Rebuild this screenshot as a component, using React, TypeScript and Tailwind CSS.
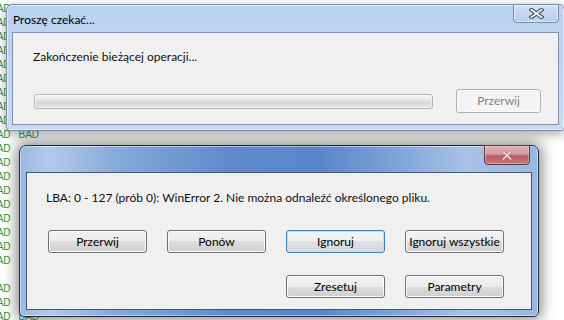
import React from 'react';

// only the cells that peek out from behind the dialogs
function Backdrop() {
  const rows = Array.from({ length: 23 }, (_, i) => i);
  return (
    <div className="pt-[2px] ml-[-10px] text-[10px] leading-[14px] text-[#2f962f] font-['Liberation_Sans',Arial,sans-serif]">
      {rows.map((i) => (
        <div key={i} className="flex h-[14px]">
          {i !== 19 && <span className="w-[28.5px]">BAD</span>}
          {(i === 9 || i === 22) && <span className="w-[28.5px]">BAD</span>}
        </div>
      ))}
    </div>
  );
}

function CloseGlyph({ active }: { active?: boolean }) {
  if (active) {
    return (
      <svg width="10" height="9" viewBox="0 0 10 9">
        <path d="M1.5 1 L8.5 8 M8.5 1 L1.5 8" stroke="#a8525b" strokeWidth="3" strokeLinecap="square" opacity="0.5" />
        <path d="M1.5 1 L8.5 8 M8.5 1 L1.5 8" stroke="#f2d9db" strokeWidth="1.6" strokeLinecap="square" />
      </svg>
    );
  }
  return (
    <svg width="15" height="11" viewBox="0 0 15 11">
      <path d="M2.5 1.8 L12.5 9.2 M12.5 1.8 L2.5 9.2" stroke="#3e4b5e" strokeWidth="4" strokeLinecap="square" />
      <path d="M2.5 1.8 L12.5 9.2 M12.5 1.8 L2.5 9.2" stroke="#eef2f7" strokeWidth="2" strokeLinecap="square" />
    </svg>
  );
}

type BtnKind = 'normal' | 'default' | 'disabled';

function Btn({ label, kind = 'normal', className = '' }: { label: string; kind?: BtnKind; className?: string }) {
  const styles: Record<BtnKind, string> = {
    normal:
      'border-[#707070] text-black bg-[linear-gradient(to_bottom,#f2f2f2_0%,#ebebeb_50%,#dddddd_50%,#cfcfcf_100%)] shadow-[inset_0_0_0_1px_#fbfbfb]',
    default:
      'border-[#3c7fb1] text-black bg-[linear-gradient(to_bottom,#f4f6f8_0%,#edf0f2_50%,#dfe3e6_50%,#d3d8dc_100%)] shadow-[inset_0_0_0_1px_#b9e1fa]',
    disabled: 'border-[#adb2b5] text-[#838383] bg-[#f4f4f4] shadow-[inset_0_0_0_1px_#fbfbfb]',
  };
  return (
    <div className={`flex items-center justify-center rounded-[3px] border text-[12px] ${styles[kind]} ${className}`}>
      {label}
    </div>
  );
}

export default function App() {
  return (
    <div className="relative w-[564px] h-[320px] overflow-hidden bg-white font-['Lato','Segoe_UI',sans-serif] text-[12px] leading-[16px] text-[#111]">
      <Backdrop />

      {/* inactive progress window */}
      <div className="absolute left-[6px] top-[4px] w-[559px] h-[127px] flex flex-col px-[5px] pb-[5px] rounded-t-[6px] rounded-b-[4px] border border-[#7c8ca1] bg-[linear-gradient(to_bottom,#bad2f0_0%,#bcd3f0_40%,#c8dbf2_100%)] shadow-[0_3px_12px_rgba(0,0,0,0.35),inset_0_0_0_1px_rgba(255,255,255,0.55)]">
        <div className="h-[27px] flex items-center pl-[1px] pt-[3px] text-black">Proszę czekać...</div>
        <div className="flex-1 border border-[#8394a9] bg-[#f0f0f0] pl-[20px] pt-[16px]">
          <div>Zakończenie bieżącej operacji...</div>
          <div className="flex items-center mt-[24px]">
            <div className="ml-[1px] w-[399px] h-[15px] rounded-[3px] border border-[#b2b2b2] bg-[linear-gradient(to_bottom,#f7f7f7_0%,#e6e6e6_35%,#d8d8d8_55%,#dedede_80%,#ebebeb_100%)] shadow-[inset_0_0_0_1px_rgba(255,255,255,0.6)]" />
            <Btn label="Przerwij" kind="disabled" className="ml-[23px] w-[85px] h-[24px]" />
          </div>
        </div>
        <div className="absolute left-[506px] top-[-1px] w-[46px] h-[19px] flex items-center justify-center rounded-b-[4px] border border-[#7a8ca4] bg-[linear-gradient(to_bottom,#d3e2f4_0%,#c3d7f0_50%,#b8cfee_100%)] shadow-[inset_0_0_0_1px_rgba(255,255,255,0.5)]">
          <CloseGlyph />
        </div>
      </div>

      {/* active error window */}
      <div className="absolute left-[19px] top-[145px] w-[520px] h-[172px] flex flex-col px-[6px] pb-[6px] rounded-t-[7px] rounded-b-[5px] border border-[#1f2d3f] bg-[linear-gradient(to_right,#9db9e0_0%,#b2caea_6%,#88aada_18%,#5e8acd_40%,#5986cb_58%,#7ea2d8_72%,#a7c2e7_86%,#9ab8e2_100%)] shadow-[0_0_14px_3px_rgba(0,0,0,0.45),inset_0_0_0_1px_rgba(255,255,255,0.45)]">
        <div className="h-[26px]" />
        <div className="flex-1 border border-[#44576f] bg-[#f0f0f0] pl-[19px] pt-[17px]">
          <div>LBA: 0 - 127 (prób 0): WinError 2. Nie można odnaleźć określonego pliku.</div>
          <div className="ml-[2px] mt-[24px] grid grid-cols-[99px_99px_99px_99px] gap-x-[20px] gap-y-[22px]">
            <Btn label="Przerwij" className="h-[23px]" />
            <Btn label="Ponów" className="h-[23px]" />
            <Btn label="Ignoruj" kind="default" className="h-[23px]" />
            <Btn label="Ignoruj wszystkie" className="h-[23px]" />
            <div />
            <div />
            <Btn label="Zresetuj" className="h-[23px]" />
            <Btn label="Parametry" className="h-[23px]" />
          </div>
        </div>
        <div className="absolute left-[464px] top-[-1px] w-[46px] h-[20px] flex items-center justify-center rounded-b-[4px] border border-[#5b3c48] bg-[linear-gradient(to_bottom,#dcb0b4_0%,#d39a9f_45%,#b95d66_55%,#c47880_100%)] shadow-[inset_0_0_0_1px_rgba(255,255,255,0.3)]">
          <CloseGlyph active />
        </div>
      </div>
    </div>
  );
}
